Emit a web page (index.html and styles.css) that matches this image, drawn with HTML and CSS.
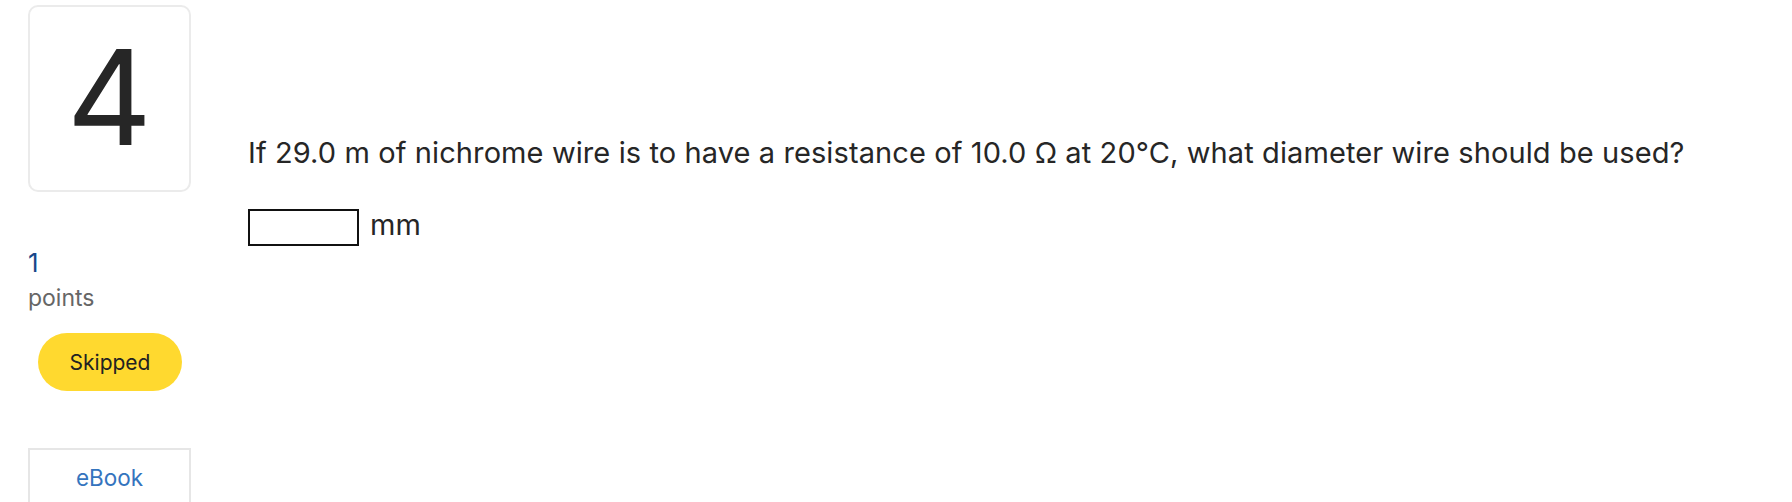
FILE: index.html
```html
<!DOCTYPE html>
<html lang="en">
<head>
<meta charset="utf-8">
<title>Question 4</title>
<link rel="stylesheet" href="styles.css">
</head>
<body>
<div class="page">
  <aside class="sidebar">
    <div class="qnum-card"><span class="qnum">4</span></div>
    <div class="points-value">1</div>
    <div class="points-label">points</div>
    <div class="status-badge">Skipped</div>
    <div class="ebook-box"><span class="ebook-link">eBook</span></div>
  </aside>
  <main class="question">
    <p class="prompt">If 29.0 m of nichrome wire is to have a resistance of 10.0 Ω at 20°C, what diameter wire should be used?</p>
    <div class="answer-row">
      <input class="answer-input" type="text" aria-label="answer">
      <span class="unit">mm</span>
    </div>
  </main>
</div>
</body>
</html>
```

FILE: styles.css
```css
html, body {
  margin: 0;
  padding: 0;
  background: #ffffff;
}

body {
  font-family: "Inter", "Lato", sans-serif;
  color: #262626;
  width: 1792px;
  height: 502px;
  overflow: hidden;
}

.page {
  display: flex;
  align-items: flex-start;
}

.sidebar {
  width: 163px;
  margin-left: 28px;
  display: flex;
  flex-direction: column;
}

.qnum-card {
  box-sizing: border-box;
  margin-top: 5px;
  height: 187px;
  border: 2px solid #ebebeb;
  border-radius: 10px;
  display: flex;
  align-items: center;
  justify-content: center;
}

.qnum {
  font-size: 132px;
  font-weight: 400;
  line-height: 1;
  color: #262626;
  margin-top: -4px;
}

.points-value {
  margin-top: 55px;
  font-size: 26px;
  line-height: 32px;
  color: #17478a;
}

.points-label {
  margin-top: 4px;
  font-size: 23px;
  line-height: 30px;
  color: #666666;
}

.status-badge {
  box-sizing: border-box;
  margin-top: 20px;
  margin-left: 10px;
  width: 144px;
  height: 58px;
  border-radius: 29px;
  background: #ffd92f;
  color: #222222;
  font-size: 21px;
  display: flex;
  align-items: center;
  justify-content: center;
}

.ebook-box {
  box-sizing: border-box;
  margin-top: 57px;
  height: 70px;
  border: 2px solid #e6e6e6;
  display: flex;
  justify-content: center;
  padding-top: 14px;
}

.ebook-link {
  font-size: 22.5px;
  line-height: 28px;
  color: #3474be;
}

.question {
  margin-left: 57px;
  padding-top: 135px;
}

.prompt {
  margin: 0;
  font-size: 29px;
  line-height: 36px;
  letter-spacing: 0.1px;
  color: #262626;
}

.answer-row {
  margin-top: 38px;
  display: flex;
  align-items: flex-start;
  gap: 11px;
}

.answer-input {
  box-sizing: border-box;
  width: 111px;
  height: 37px;
  border: 2px solid #111111;
  border-radius: 0;
  margin: 0;
  padding: 0;
  background: #ffffff;
}

.unit {
  font-size: 29px;
  line-height: 36px;
  margin-top: -2px;
  color: #262626;
}
```
